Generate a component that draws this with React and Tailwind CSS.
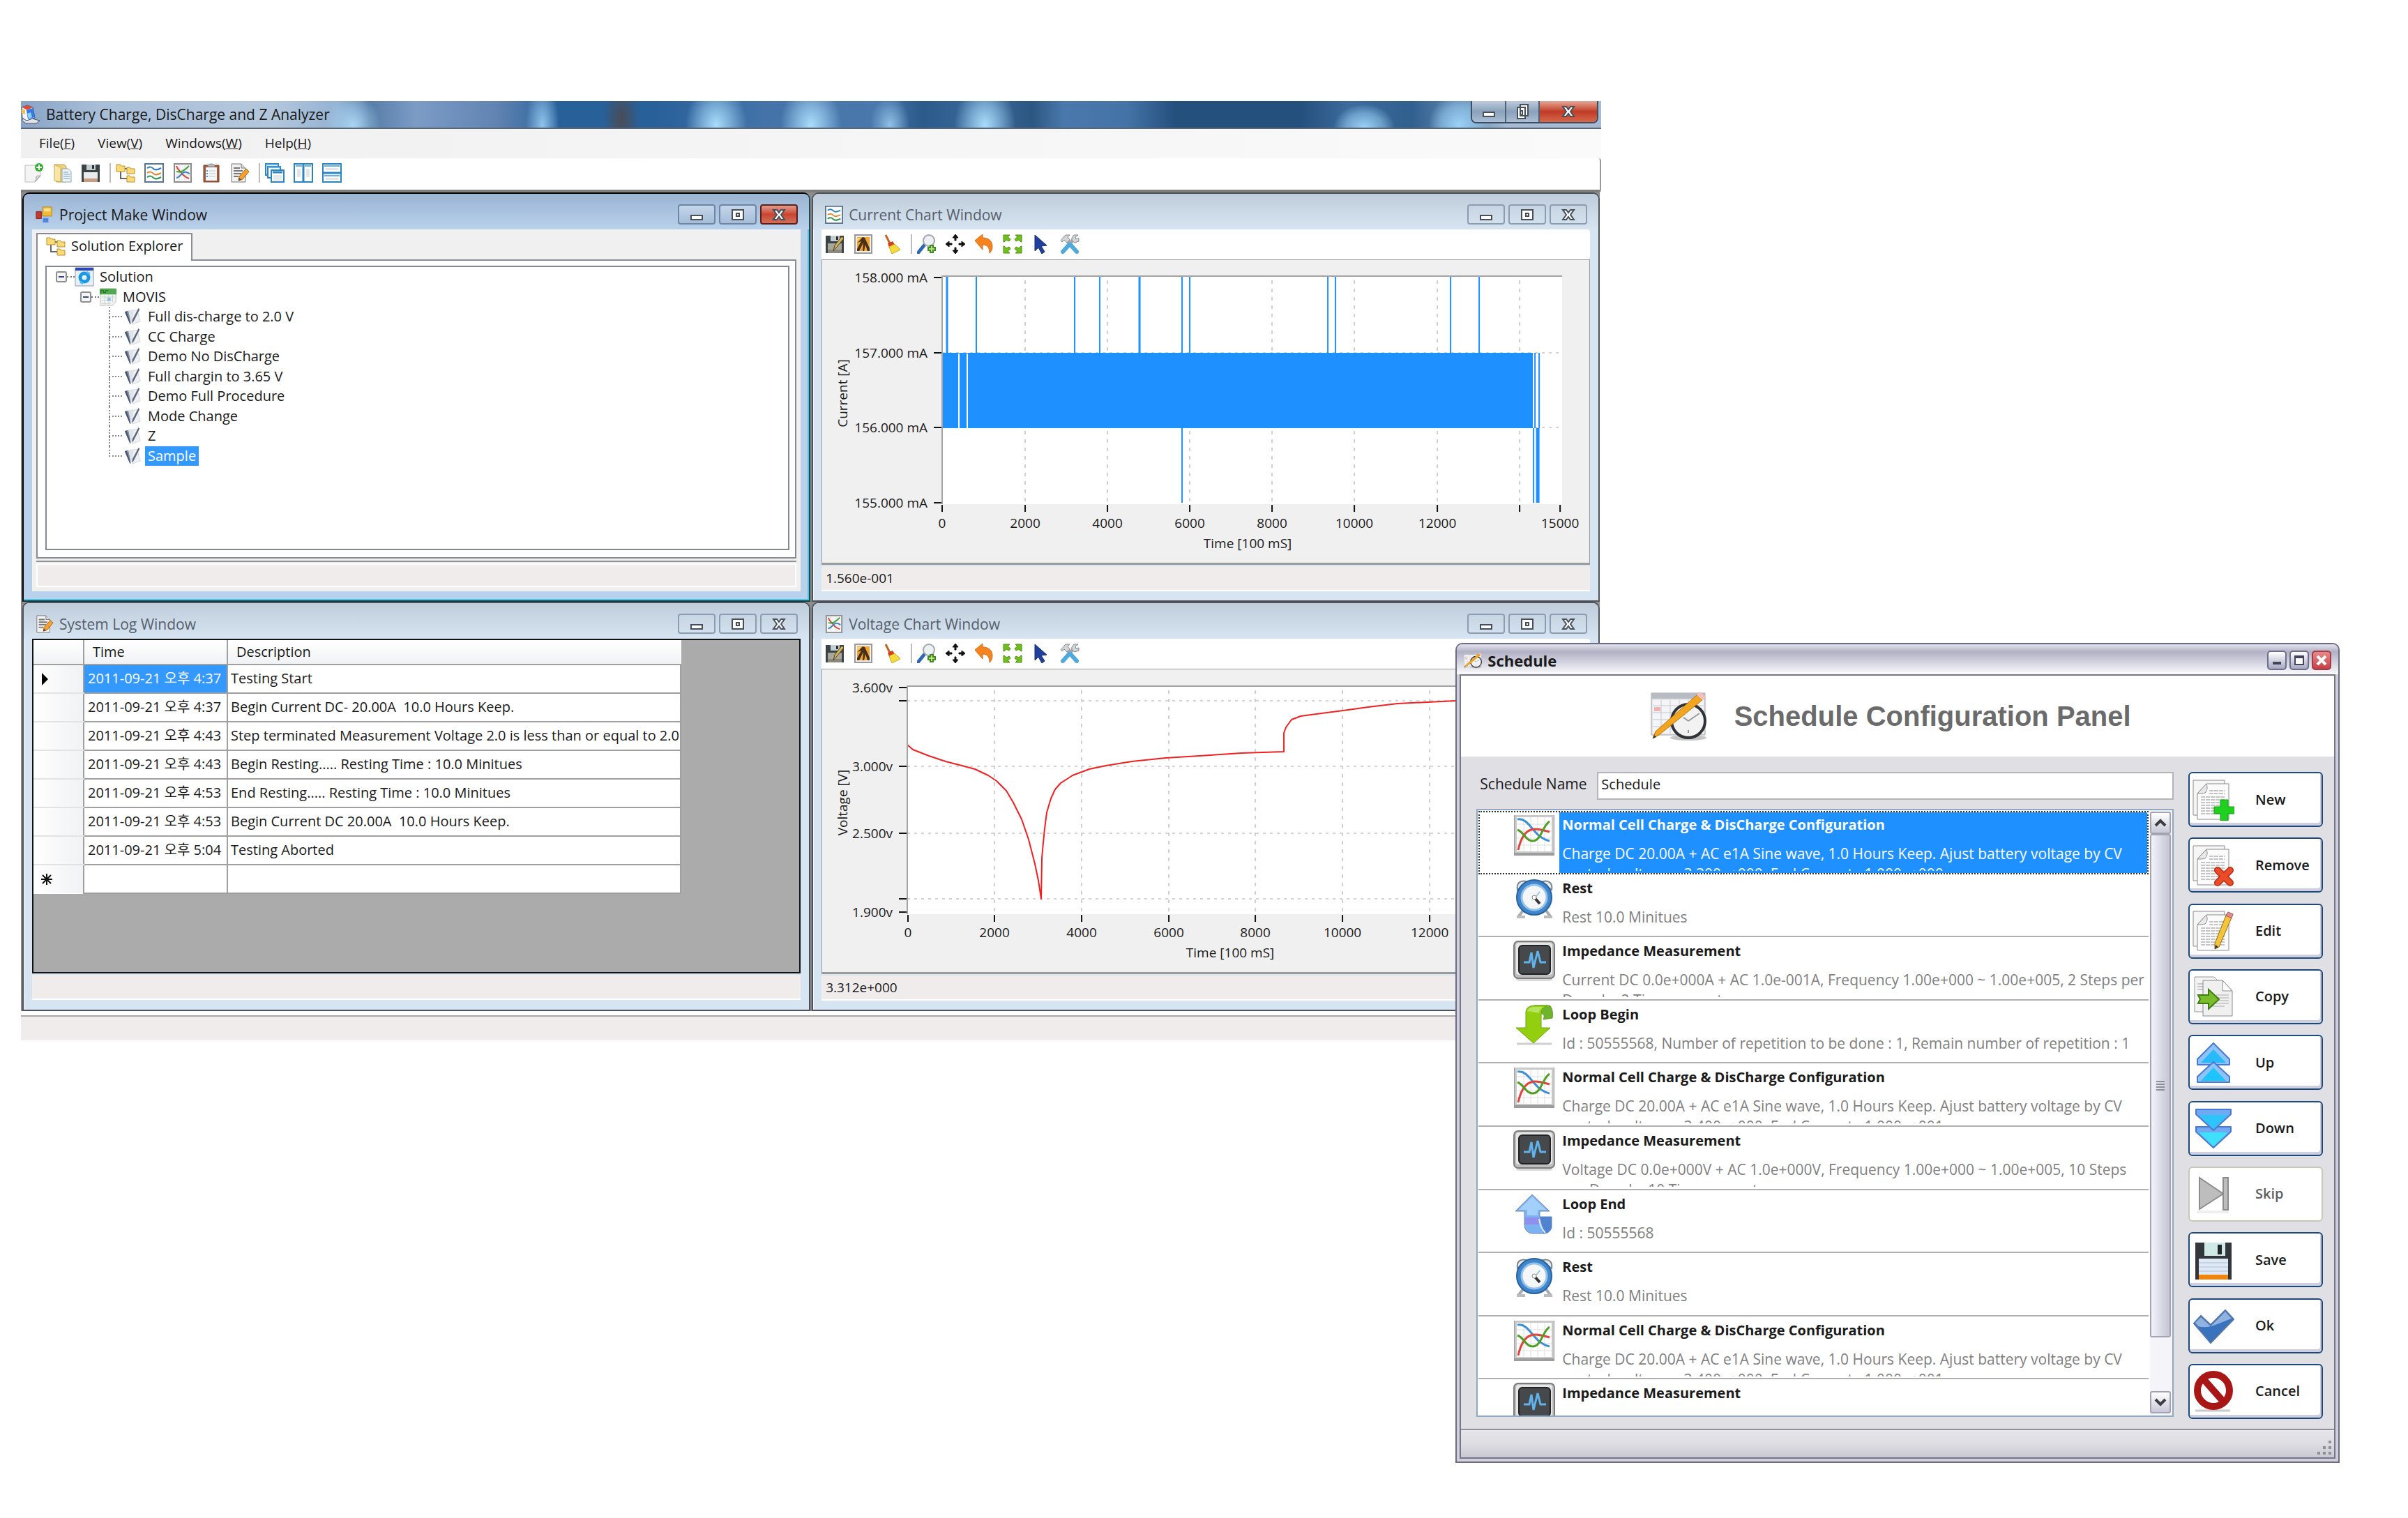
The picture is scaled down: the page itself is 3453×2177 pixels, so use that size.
const logRows = [
  { time: "2011-09-21 오후 4:37", text: "Testing Start", selected: true },
  { time: "2011-09-21 오후 4:37", text: "Begin Current DC- 20.00A  10.0 Hours Keep." },
  { time: "2011-09-21 오후 4:43", text: "Step terminated Measurement Voltage 2.0 is less than or equal to 2.0" },
  { time: "2011-09-21 오후 4:43", text: "Begin Resting..... Resting Time : 10.0 Minitues" },
  { time: "2011-09-21 오후 4:53", text: "End Resting..... Resting Time : 10.0 Minitues" },
  { time: "2011-09-21 오후 4:53", text: "Begin Current DC 20.00A  10.0 Hours Keep." },
  { time: "2011-09-21 오후 5:04", text: "Testing Aborted" },
]

const treeItems = [
  "Full dis-charge to 2.0 V",
  "CC Charge",
  "Demo No DisCharge",
  "Full chargin to 3.65 V",
  "Demo Full Procedure",
  "Mode Change",
  "Z",
  "Sample",
]

const steps = [
  { icon: CurvesIcon, title: "Normal Cell Charge & DisCharge Configuration", lines: ["Charge DC 20.00A + AC e1A Sine wave, 1.0 Hours Keep. Ajust battery voltage by CV", "control, voltage = 3.300e+000, End Current : 1.000e+000"], selected: true },
  { icon: AlarmIcon, title: "Rest", lines: ["Rest 10.0 Minitues"] },
  { icon: PulseIcon, title: "Impedance Measurement", lines: ["Current DC 0.0e+000A + AC 1.0e-001A, Frequency 1.00e+000 ~ 1.00e+005, 2 Steps per", "Decade, 2 Times repeat"] },
  { icon: LoopBeginIcon, title: "Loop Begin", lines: ["Id : 50555568, Number of repetition to be done : 1, Remain number of repetition : 1"] },
  { icon: CurvesIcon, title: "Normal Cell Charge & DisCharge Configuration", lines: ["Charge DC 20.00A + AC e1A Sine wave, 1.0 Hours Keep. Ajust battery voltage by CV", "control, voltage = 3.400e+000, End Current : 1.000e+001"] },
  { icon: PulseIcon, title: "Impedance Measurement", lines: ["Voltage DC 0.0e+000V + AC 1.0e+000V, Frequency 1.00e+000 ~ 1.00e+005, 10 Steps", "per Decade, 10 Times repeat"] },
  { icon: LoopEndIcon, title: "Loop End", lines: ["Id : 50555568"] },
  { icon: AlarmIcon, title: "Rest", lines: ["Rest 10.0 Minitues"] },
  { icon: CurvesIcon, title: "Normal Cell Charge & DisCharge Configuration", lines: ["Charge DC 20.00A + AC e1A Sine wave, 1.0 Hours Keep. Ajust battery voltage by CV", "control, voltage = 3.400e+000, End Current : 1.000e+001"] },
  { icon: PulseIcon, title: "Impedance Measurement", lines: [] },
]

const actions = [
  { label: "New", icon: NewDocIcon },
  { label: "Remove", icon: RemoveDocIcon },
  { label: "Edit", icon: EditDocIcon },
  { label: "Copy", icon: CopyDocIcon },
  { label: "Up", icon: UpIcon },
  { label: "Down", icon: DownIcon },
  { label: "Skip", icon: SkipIcon, disabled: true },
  { label: "Save", icon: DiskIcon },
  { label: "Ok", icon: OkIcon },
  { label: "Cancel", icon: CancelIcon },
]

/* ---------- small icons (28px grid) ---------- */

function Small({ children, className = "size-7" }) {
  return (
    <svg viewBox="0 0 28 28" className={"shrink-0 " + className} aria-hidden="true">
      {children}
    </svg>
  )
}

function AppIcon() {
  return (
    <Small>
      <path d="M1 22 8 18l19 5-5 4H7z" fill="#dfe3ea" stroke="#4b5160" />
      <path d="M1 4 9 1l8 3 3 15-12 4-6-4z" fill="#f2f5fa" stroke="#3b4a6b" />
      <path d="M2 4 9 1l8 3-8 4z" fill="#e34a35" />
      <path d="M8 8l9-3 3 13-10 3z" fill="#2f7bea" />
      <path d="M9 13l5-2 2 7-5 2z" fill="#8fd0fb" />
      <path d="M1 6l5 2v6l-5-2z" fill="#f4c24b" />
    </Small>
  )
}

function NewFileIcon() {
  return (
    <Small>
      <path d="M2 3h22v15l-8 9H2z" fill="#f4f4f4" stroke="#bdbdbd" />
      <path d="M24 18c-3 0-6 0-6 2s0 4-2 7z" fill="#dcdcdc" stroke="#9a9a9a" />
      <circle cx="22" cy="6" r="6" fill="#2fb02c" />
      <path d="M22 2v8M18 6h8" stroke="#fff" strokeWidth="2" />
    </Small>
  )
}

function OpenIcon() {
  return (
    <Small>
      <path d="M3 2h14l3 3v22H6z" fill="#efd27e" stroke="#c19e4b" />
      <path d="M3 2l9 4v21l-9-2z" fill="#f9e6a4" stroke="#c9a857" />
      <path d="M14 8h9l4 4v15H14z" fill="#eef5fa" stroke="#8fa5b5" />
      <path d="M16 13h7M16 16h9M16 19h9M16 22h9" stroke="#6f9db8" />
    </Small>
  )
}

function FloppyIcon({ pen }) {
  return (
    <Small>
      <path d="M1 2h26v25H1z" fill="#3b4347" />
      <path d="M8 2h13v8H8z" fill="#c3ced0" />
      <path d="M16 3h3v5h-3z" fill="#2a2f31" />
      <path d="M4 13h20v14H4z" fill={pen ? "#a9a69c" : "#e9ebec"} />
      <path d="M4 22h20v5H4z" fill={pen ? "#8b877b" : "#c59d83"} />
      {pen && <path d="M24 3 14 16l-2 8 5-6L27 6z" fill="#d1b45b" stroke="#51431c" />}
    </Small>
  )
}

function TreeIcon({ className }) {
  return (
    <Small className={className}>
      <path d="M7 11v11h11M13 8h6" fill="none" stroke="#666" strokeWidth="2" />
      <path d="M1 2h5l2 2h5v8H1z" fill="#fadb76" stroke="#bc8d2b" />
      <path d="M16 6h4l2 2h5v7H16z" fill="#fadb76" stroke="#bc8d2b" />
      <path d="M16 18h4l2 2h5v7H16z" fill="#fadb76" stroke="#bc8d2b" />
    </Small>
  )
}

function WavesIcon({ className }) {
  return (
    <Small className={className}>
      <path d="M1 1h26v26H1z" fill="#fff" stroke="#5a7493" strokeWidth="2" />
      <path d="M4 7c4-2 6-2 9 1s7 1 11-1" fill="none" stroke="#2f7fb9" strokeWidth="2" />
      <path d="M4 14c4-2 6-2 9 1s7 1 11-1" fill="none" stroke="#e08a34" strokeWidth="2" />
      <path d="M4 20c4-2 6-2 9 1s7 1 11-1" fill="none" stroke="#2f9550" strokeWidth="2" />
    </Small>
  )
}

function MiniChartIcon({ className }) {
  return (
    <Small className={className}>
      <path d="M2 1h24v26H2z" fill="#f7f7f7" stroke="#8d8d8d" strokeWidth="2" />
      <path d="M4 9h20M4 17h20M9 3v22M17 3v22" stroke="#ddd" />
      <path d="M5 4c2 6 6 8 8 11s5 5 10 7" fill="none" stroke="#d9443a" strokeWidth="2" />
      <path d="M5 12c8 2 11-2 18-8" fill="none" stroke="#3f9d3a" strokeWidth="2" />
      <path d="M5 21c6-1 7-7 11-8s5 1 8 2" fill="none" stroke="#357fc4" strokeWidth="2" />
    </Small>
  )
}

function ClipboardIcon() {
  return (
    <Small>
      <path d="M3 3h22v24H3z" fill="#a55a3c" stroke="#7f412a" />
      <path d="M6 6h16v19H6z" fill="#f4f7fa" />
      <path d="M9 5c0-3 2-4 5-4s5 1 5 4z" fill="#b9bec3" stroke="#8a8e92" />
      <path d="M11 11h9M11 15h9M11 19h9" stroke="#c0c6cc" />
      <path d="M7 11h2M7 15h2M7 19h2" stroke="#3aa0d8" strokeWidth="2" />
    </Small>
  )
}

function NoteIcon({ className }) {
  return (
    <Small className={className}>
      <path d="M2 1h14l6 6v20H2z" fill="#f2f2f2" stroke="#777" />
      <path d="M16 1v6h6" fill="#ddd" stroke="#777" />
      <path d="M5 7h9M5 11h13M5 15h11M5 19h7" stroke="#777" strokeWidth="2" />
      <path d="M23 8l4 4-9 11-6 2 1-6z" fill="#f6a12c" stroke="#a9611a" />
      <path d="M12 25l1-4 3 3z" fill="#444" />
    </Small>
  )
}

function CascadeIcon() {
  return (
    <Small>
      <g fill="#fff" stroke="#2a85c4" strokeWidth="2">
        <path d="M1 1h18v16H1z" />
        <path d="M4 5h18v16H4z" />
        <path d="M9 10h18v17H9z" />
      </g>
      <path d="M1 2h18M4 6h18" stroke="#5fb4ea" strokeWidth="2" />
      <path d="M11 13h14" stroke="#2a85c4" strokeWidth="3" />
      <path d="M12 17h12v8H12z" fill="#e5e9ee" />
    </Small>
  )
}

function SplitIcon({ rows }) {
  return (
    <Small>
      <path d="M1 1h26v26H1z" fill="#fff" stroke="#2a85c4" strokeWidth="2" />
      {rows ? (
        <path d="M1 14h26" stroke="#2a85c4" strokeWidth="3" />
      ) : (
        <path d="M14 1v26" stroke="#2a85c4" strokeWidth="3" />
      )}
      <path d={rows ? "M3 4h22M3 18h22" : "M3 4h9M16 4h9"} stroke="#5fb4ea" strokeWidth="2" />
      <path d={rows ? "M5 7h18v3H5zM5 21h18v3H5z" : "M5 8h5v12H5zM18 8h5v12h-5z"} fill="#e2e4ea" />
    </Small>
  )
}

function FormIcon() {
  return (
    <Small className="size-[26px]">
      <path d="M1 9h8v11H1z" fill="#c4382d" stroke="#8e211a" />
      <path d="M11 2h14v14H11z" fill="#f3b930" stroke="#b1831b" />
      <path d="M13 4h10v5H13z" fill="#fbe093" />
      <path d="M11 19h9v7h-9z" fill="#4d84d8" stroke="#8fb4ee" />
    </Small>
  )
}

function PictureIcon() {
  return (
    <Small>
      <path d="M2 1h24v26H2z" fill="#f2f0ee" stroke="#9a9a9a" strokeWidth="2" />
      <path d="M5 4h18v20H5z" fill="#f6a52a" />
      <path d="M5 5h6l-6 5z" fill="#fbd27a" />
      <path d="M6 12l7-8 3 1 7 15v4h-3l-3-9-2 9h-2l1-12-6 12H5v-3l6-11z" fill="#47301b" />
    </Small>
  )
}

function BroomIcon() {
  return (
    <Small>
      <path d="M5 1l6 12" stroke="#c0651e" strokeWidth="3" />
      <path d="M8 13l7-3 3 5-8 4z" fill="#d63c22" />
      <path d="M10 18l8-4 8 8-12 6z" fill="#f4dc3c" stroke="#c9a91a" />
    </Small>
  )
}

function ZoomIcon() {
  return (
    <Small>
      <path d="M2 26l8-10" stroke="#2f67b5" strokeWidth="5" strokeLinecap="round" />
      <circle cx="17" cy="9" r="8" fill="#eef1f4" stroke="#a2a6aa" strokeWidth="2" />
      <path d="M21 15v12M15 21h12" stroke="#3f8b22" strokeWidth="6" />
      <path d="M21 17v8M17 21h8" stroke="#b5e27d" strokeWidth="2" />
    </Small>
  )
}

function MoveIcon() {
  return (
    <Small>
      <path d="M14 0l4 5h-3v4h-2V5h-3zM14 28l4-5h-3v-4h-2v4h-3zM0 14l5-4v3h4v2H5v3zM28 14l-5-4v3h-4v2h4v3z" fill="#111" stroke="#111" />
    </Small>
  )
}

function UndoIcon() {
  return (
    <Small>
      <path d="M1 9 12 0v5c9 0 14 5 14 13 0 4-2 7-4 9 0-8-3-12-10-12v7z" fill="#f58420" stroke="#d9690f" />
    </Small>
  )
}

function ExpandIcon() {
  return (
    <Small>
      <g fill="#6fbf1d" stroke="#4b8f10">
        <path d="M1 1h9l-3 3 4 3-2 3-4-2-3 3H1zM27 1h-9l3 3-4 3 2 3 4-2 3 3h1zM1 27h9l-3-3 4-3-2-3-4 2-3-3H1zM27 27h-9l3-3-4-3 2-3 4 2 3-3h1z" />
      </g>
    </Small>
  )
}

function PointerIcon() {
  return (
    <Small>
      <path d="M5 1l17 15-8 1 5 8-4 3-5-9-5 5z" fill="#20409e" stroke="#12276c" />
    </Small>
  )
}

function ToolsIcon() {
  return (
    <Small>
      <path d="M13 14 22 5M15 14 6 5" stroke="#a3a7ab" strokeWidth="5" />
      <path d="M4 25 13 15M24 25 15 15" stroke="#4fa9dc" strokeWidth="6" strokeLinecap="round" />
      <path d="M1 9 8 1h6l-3 3 3 4-4 4-4-4-3 3zM26 1h-6l-3 4v4l4 3 6-2V6l-4 1-1-3z" fill="#d3d6d9" stroke="#83878b" />
    </Small>
  )
}

function SolutionIcon() {
  return (
    <Small>
      <path d="M1 1h26v26H1z" fill="#e9eff7" stroke="#8b99ad" />
      <path d="M1 1h26v4H1z" fill="#2b47b5" />
      <circle cx="14" cy="15" r="6" fill="none" stroke="#1698e6" strokeWidth="5" />
      <path d="M8 21l4 3M17 7l5 3" stroke="#56b9f2" strokeWidth="3" />
    </Small>
  )
}

function SheetIcon() {
  return (
    <Small className="size-[26px]">
      <path d="M2 1h24v20l-6 6H2z" fill="#f3f5f3" stroke="#b5bbb5" />
      <path d="M1 1h26v9H1z" fill="#52a851" />
      <path d="M3 8V4h4v3h3V4h4" stroke="#235f25" fill="none" />
      <path d="M4 14h20M4 19h18M4 24h14M9 11v15M15 11v15M21 11v11" stroke="#c6d0c8" />
      <path d="M13 15h5v5h-5z" fill="#8dbcf0" />
    </Small>
  )
}

function StepIcon() {
  return (
    <Small className="h-7 w-6">
      <path d="M8 4l14-1 5 19-13 5z" fill="#eef0f2" stroke="#cfd2d6" />
      <path d="M1 6l6-2 5 20-2 3z" fill="#8692a6" />
      <path d="M1 6l3-1 7 20-1 2z" fill="#46546e" />
      <path d="M8 4l8 1-3 18-2 4z" fill="#dfe3e8" />
      <path d="M24 0l2 2-10 20-3 3 1-6z" fill="#5b6880" />
    </Small>
  )
}

/* ---------- large icons (60px grid) ---------- */

function Large({ children, className = "size-[60px]" }) {
  return (
    <svg viewBox="0 0 60 60" className={"shrink-0 " + className} aria-hidden="true">
      {children}
    </svg>
  )
}

function CurvesIcon() {
  return (
    <Large>
      <path d="M1 1h58v58H1z" fill="#9c9c9c" />
      <path d="M2 1h56v54H2z" fill="#c9c9c9" />
      <path d="M5 4h50v49H5z" fill="#fff" />
      <path d="M5 14h50M5 24h50M5 34h50M5 44h50M15 4v49M25 4v49M35 4v49M45 4v49" stroke="#dedede" />
      <path d="M6 7c18-3 22 26 46 31" fill="none" stroke="#3c8fd6" strokeWidth="3" />
      <path d="M7 51c8-36 24-32 45-26" fill="none" stroke="#e0453c" strokeWidth="3" />
      <path d="M6 22c10 4 12 16 22 16 12 0 14-22 24-28" fill="none" stroke="#4f9e22" strokeWidth="3" />
    </Large>
  )
}

function AlarmIcon() {
  return (
    <Large>
      <path d="M14 47l-7 9M47 47l7 9" stroke="#a9adb1" strokeWidth="4" />
      <path d="M5 56h12M44 56h12" stroke="#bdbdbd" strokeWidth="4" />
      <path d="M6 17C4 6 12 2 22 6zM55 17C57 6 49 2 39 6z" fill="#e8ebee" stroke="#7d858d" strokeWidth="2" />
      <ellipse cx="30" cy="28" rx="25" ry="25" fill="#3f86cc" stroke="#27609e" strokeWidth="2" />
      <ellipse cx="30" cy="28" rx="18" ry="18" fill="#f4f6f8" stroke="#96c3ea" strokeWidth="3" />
      <path d="M31 29l7-9" stroke="#9cc6d8" strokeWidth="2" />
      <path d="M30 28l8 9" stroke="#333" strokeWidth="4" />
      <circle cx="30" cy="28" r="3" fill="#fff" stroke="#8b8b8b" />
    </Large>
  )
}

function PulseIcon() {
  return (
    <Large>
      <rect x="4" y="50" width="52" height="8" rx="4" fill="#d9d9d9" />
      <rect x="1" y="1" width="58" height="53" rx="6" fill="#bdbdbd" stroke="#7c7c7c" strokeWidth="2" />
      <rect x="4" y="3" width="52" height="46" rx="4" fill="#e6e6e6" />
      <rect x="8" y="7" width="45" height="41" rx="5" fill="#46494c" stroke="#222" strokeWidth="2" />
      <path d="M15 31h8l3-14 3 22 6-24 4 16h8" fill="none" stroke="#5fb3ea" strokeWidth="3" />
    </Large>
  )
}

function LoopBeginIcon() {
  return (
    <Large>
      <path d="M5 57h50" stroke="#cfcfcf" strokeWidth="3" />
      <path d="M30 2h22c4 3 5 10 4 18l-13 2c3-6 0-9-4-8z" fill="#6fb52b" stroke="#5c9a1e" />
      <path d="M18 34V12C18 5 24 2 31 2h18c-7 3-9 7-9 13v19h13L29 56 4 34z" fill="#93cf0e" stroke="#6da512" />
      <path d="M20 10c2-5 6-6 11-6h12c-4 2-6 6-6 9z" fill="#b5e45f" />
    </Large>
  )
}

function LoopEndIcon() {
  return (
    <Large>
      <path d="M16 44V25H3L27 1l25 24H38v8h17v14c0 5-5 10-11 10H28c-7 0-12-5-12-13z" fill="#7db2f2" stroke="#7587a8" />
      <path d="M38 33h17v14c0 5-5 10-11 10z" fill="#4f82cf" />
      <path d="M17 34h20v10H17z" fill="#8f8ff0" />
      <path d="M27 4 8 23h12v8h15v-8h12z" fill="#a3d0fb" />
      <path d="M37 36c1 9 4 15 9 20" stroke="#e2eefb" strokeWidth="2" fill="none" />
    </Large>
  )
}

function Pages() {
  return (
    <g>
      <path d="M1 2h45v50H1z" fill="#f6f6f6" stroke="#8b8b8b" />
      <path d="M20 7h32v51H7V21z" fill="#fbfbfb" stroke="#8b8b8b" />
      <path d="M20 7c2 6 1 10-2 13-3 1-7 1-11 1z" fill="#e8e8e8" stroke="#8b8b8b" />
      <path d="M24 17h22M24 21h22M12 26h34M12 30h34M12 34h34M12 38h34M12 42h34M12 46h34M12 50h34" stroke="#8f8f8f" strokeDasharray="6 1" />
    </g>
  )
}

function NewDocIcon() {
  return (
    <Large>
      <Pages />
      <path d="M40 30h11v10h9v10h-9v10H40V50H31V40h9z" fill="#1fd01f" stroke="#12a012" />
    </Large>
  )
}

function RemoveDocIcon() {
  return (
    <Large>
      <Pages />
      <path d="M36 37l18 18M54 37 36 55" stroke="#b52a12" strokeWidth="10" strokeLinecap="round" />
      <path d="M36 37l18 18M54 37 36 55" stroke="#ec4b28" strokeWidth="7" strokeLinecap="round" />
    </Large>
  )
}

function EditDocIcon() {
  return (
    <Large>
      <Pages />
      <path d="M48 8l8 3-18 42-6 3v-8z" fill="#f3c43c" stroke="#8f6b12" />
      <path d="M48 8l3-5 7 3-2 6z" fill="#e58a8a" stroke="#a85555" />
      <path d="M32 56l1-6 4 3z" fill="#333" />
    </Large>
  )
}

function CopyDocIcon() {
  return (
    <Large>
      <path d="M3 2h28l6 6v44H3z" fill="#f4f4f4" stroke="#999" />
      <path d="M7 12h22M7 16h22M7 20h22" stroke="#999" />
      <path d="M15 7h28l14 15v36H15z" fill="#f0f0f0" stroke="#888" />
      <path d="M43 7v15h14z" fill="#fff" stroke="#888" />
      <path d="M34 28h18M34 32h18M30 36h22M28 40h24M24 44h22" stroke="#aaa" />
      <path d="M8 28h15v-8l15 14-15 14v-8H8l3-6z" fill="#79bd2a" stroke="#3f7c12" strokeWidth="2" />
    </Large>
  )
}

function UpIcon() {
  return (
    <Large>
      <g stroke="#4b78d0" strokeWidth="2" strokeLinejoin="round">
        <path d="M30 2 53 25v8H7v-8z" fill="#8cc3fb" />
        <path d="M30 11 48 30H12z" fill="#27b9f8" stroke="none" />
        <path d="M30 29 53 50v8H7v-8z" fill="#8cc3fb" />
        <path d="M30 37 48 56H12z" fill="#1fc4fb" stroke="none" />
      </g>
    </Large>
  )
}

function DownIcon() {
  return (
    <Large>
      <g stroke="#4b78d0" strokeWidth="2" strokeLinejoin="round">
        <path d="M5 28h50v7L30 58 5 35z" fill="#6fa9f2" />
        <path d="M9 36h42L30 56z" fill="#3fe0fb" stroke="none" />
        <path d="M5 3h50v7L30 33 5 10z" fill="#6fa9f2" />
        <path d="M9 11h42L30 31z" fill="#2cc4fa" stroke="none" />
      </g>
    </Large>
  )
}

function SkipIcon() {
  return (
    <Large>
      <path d="M6 56h46" stroke="#eee" strokeWidth="4" />
      <path d="M10 7l34 23L10 52z" fill="#bdbdbd" stroke="#8c8c8c" strokeWidth="2" />
      <path d="M44 7h7v46h-7z" fill="#bdbdbd" stroke="#8c8c8c" strokeWidth="2" />
    </Large>
  )
}

function DiskIcon() {
  return (
    <Large>
      <path d="M4 5h52v53H4z" fill="#33373b" />
      <path d="M17 5h30v19H17z" fill="#cfeae6" />
      <path d="M36 8h6v14h-6z" fill="#23272a" />
      <path d="M9 28h42v24H9z" fill="#dfe9f5" />
      <path d="M9 34h42M9 40h42M9 46h42" stroke="#aebfd2" />
      <path d="M9 51h42v7H9z" fill="#f0850c" />
    </Large>
  )
}

function OkIcon() {
  return (
    <Large>
      <path d="M2 27l10-11 14 13L47 8l12 13-33 34z" fill="#3a73bd" stroke="#5476a8" strokeWidth="2" />
      <path d="M4 26l8-8 14 13L47 10l9 10C38 26 24 36 8 31z" fill="#b4cdef" opacity="0.7" />
    </Large>
  )
}

function CancelIcon() {
  return (
    <Large>
      <path d="M4 58h50" stroke="#c9c9c9" strokeWidth="3" />
      <circle cx="30" cy="29" r="23" fill="#fff" stroke="#a81616" strokeWidth="10" />
      <path d="M15 12l30 34" stroke="#a81616" strokeWidth="10" />
    </Large>
  )
}

function ScheduleIcon({ className }) {
  return (
    <svg viewBox="0 0 80 72" className={"shrink-0 " + className} aria-hidden="true">
      <path d="M1 3h77v60H1z" fill="#e4e4e9" stroke="#a3a3ad" />
      <path d="M1 3h77v8H1z" fill="#b9bbc4" />
      <path d="M3 13h73v48H3z" fill="#f5f5f8" />
      <path d="M3 21h73M3 31h73M3 41h73M3 51h73M15 13v48M28 13v48M41 13v48M54 13v48M67 13v48" stroke="#c5c6d0" />
      <path d="M5 23h9v6H5z" fill="#f3b1b1" />
      <ellipse cx="54" cy="67" rx="26" ry="4" fill="#c4c4c4" />
      <circle cx="54" cy="43" r="24" fill="#f2f2f2" stroke="#2f3236" strokeWidth="4" />
      <path d="M54 43l16-11M54 43l-7-5M54 60v-4" stroke="#9a9a9a" strokeWidth="2" />
      <path d="M66 6l8 7L12 63l-9 5 4-10z" fill="#f2a51e" stroke="#b9740f" />
      <path d="M66 6l4-5 9 7-5 5z" fill="#f3c2b9" />
      <path d="M3 68l2-5 3 3z" fill="#333" />
    </svg>
  )
}

/* ---------- window parts ---------- */

function Glyph({ kind }) {
  return (
    <svg viewBox="0 0 24 24" className="size-6" aria-hidden="true">
      <g fill="#fff" stroke="#474f5a" strokeWidth="2">
        {kind === "min" && <path d="M4 13h16v6H4z" />}
        {kind === "max" && <path d="M4 5h16v14H4zM10 10h4v4h-4z" />}
        {kind === "restore" && <path d="M9 2h11v16H9zM5 6h11v16H5zM9 11h3v6H9z" />}
        {kind === "close" && <path d="M4 5h5l3 4 3-4h5l-5 7 5 7h-5l-3-4-3 4H4l5-7z" />}
      </g>
    </svg>
  )
}

function ChildWindow({ icon, title, active, children }) {
  const frame = active
    ? "border-black border-r-[#1d4a55] border-b-[#0c3b42] bg-[#b9d1ea] shadow-[inset_-2px_-2px_0_#48c8e4]"
    : "border-[#4d5359] bg-[#d7e4f2] shadow-[inset_1px_1px_0_#f2f7fc]"
  const bar = active ? "bg-linear-to-b from-[#9ab4d3] to-[#b9d1ea]" : "bg-linear-to-b from-[#bfcddb] to-[#d7e4f2] text-[#56606b]"
  const btn = active
    ? "border-[#6d86a6] bg-linear-to-b from-[#c5d6ea] to-[#a5bdd9]"
    : "border-[#8c9db3]"
  const close = active ? "border-[#5d1f1c] bg-linear-to-b from-[#e09a8c] via-[#c9452f] to-[#d0705a]" : btn
  return (
    <section className={"flex min-w-0 flex-col rounded-t-[10px] border-2 px-3 pb-[13px] " + frame}>
      <header className={"-mx-3 flex h-[51px] shrink-0 items-center gap-2 rounded-t-lg pt-2 pr-4 pl-[17px] " + bar}>
        {icon}
        <h2 className="flex-1 text-[21px] leading-7 whitespace-nowrap">{title}</h2>
        <div className="flex gap-[5px]">
          <button aria-label="Minimize" className={"flex h-[29px] w-[54px] items-center justify-center rounded-[4px] border-2 " + btn}>
            <Glyph kind="min" />
          </button>
          <button aria-label="Maximize" className={"flex h-[29px] w-[54px] items-center justify-center rounded-[4px] border-2 " + btn}>
            <Glyph kind="max" />
          </button>
          <button aria-label="Close" className={"flex h-[29px] w-[54px] items-center justify-center rounded-[4px] border-2 " + close}>
            <Glyph kind="close" />
          </button>
        </div>
      </header>
      {children}
    </section>
  )
}

function Separator() {
  return <span className="-mr-[6px] h-7 w-[2px] bg-[#bdbdbd]" />
}

function ToolButton({ label, children }) {
  return (
    <button aria-label={label} className="size-7">
      {children}
    </button>
  )
}

function ChartToolbar() {
  return (
    <div className="flex h-[43px] shrink-0 items-center gap-[13px] rounded-r-sm bg-white pb-[2px] pl-[5px]">
      <ToolButton label="Save as"><FloppyIcon pen /></ToolButton>
      <ToolButton label="Save picture"><PictureIcon /></ToolButton>
      <ToolButton label="Clear"><BroomIcon /></ToolButton>
      <Separator />
      <ToolButton label="Zoom"><ZoomIcon /></ToolButton>
      <ToolButton label="Pan"><MoveIcon /></ToolButton>
      <ToolButton label="Undo"><UndoIcon /></ToolButton>
      <ToolButton label="Fit"><ExpandIcon /></ToolButton>
      <ToolButton label="Pointer"><PointerIcon /></ToolButton>
      <ToolButton label="Options"><ToolsIcon /></ToolButton>
    </div>
  )
}

function StatusLine({ children }) {
  return (
    <div className="mt-[2px] mb-[2px] h-[34px] shrink-0 bg-[#f0eceb] px-[6px] text-[19px] leading-[34px] shadow-[0_2px_0_#fff]">
      {children}
    </div>
  )
}

function Axes({ left, top, right, bottom, xTicks, yTicks, yTitle, xTitleAt, children }) {
  return (
    <svg viewBox="0 0 1100 434" className="block w-full text-[19px]" fill="#1a1a1a">
      <path d={`M${left} ${top}H${right}V${bottom}H${left}z`} fill="#fff" />
      {xTicks.map((t, i) => i > 0 && t.x < right - 5 && (
        <path key={t.x} d={`M${t.x} ${top + 6}V${bottom}`} stroke="#cfcfcf" strokeWidth="2" strokeDasharray="5 7" />
      ))}
      {yTicks.map(t => t.grid && (
        <path key={t.y} d={`M${left} ${t.y}H${right}`} stroke="#d3d3d3" strokeWidth="2" strokeDasharray="4 6" />
      ))}
      {children}
      <path d={`M${left} ${bottom}V${top}H${right}`} fill="none" stroke="#a3a3a3" strokeWidth="2" />
      {xTicks.map(t => (
        <g key={t.x}>
          <path d={`M${t.x} ${bottom + 1}v10`} stroke="#111" strokeWidth="2" />
          {t.label && <text x={t.x} y="384" textAnchor="middle">{t.label}</text>}
        </g>
      ))}
      {yTicks.map(t => (
        <g key={t.y}>
          <path d={`M${left - 12} ${t.y}h11`} stroke="#111" strokeWidth="2" />
          {t.label && <text x={left - 21} y={t.y + 7} textAnchor="end">{t.label}</text>}
        </g>
      ))}
      <text x={xTitleAt} y="413" textAnchor="middle">Time [100 mS]</text>
      <text transform="translate(36 191) rotate(-90)" textAnchor="middle">{yTitle}</text>
    </svg>
  )
}

function CurrentChart() {
  const up = [221, 362, 398, 516, 527, 725, 736, 901, 942]
  return (
    <Axes
      left={172}
      top={23}
      right={1061}
      bottom={350}
      xTitleAt={610}
      yTitle="Current  [A]"
      xTicks={[
        { x: 172, label: "0" }, { x: 291, label: "2000" }, { x: 409, label: "4000" },
        { x: 527, label: "6000" }, { x: 645, label: "8000" }, { x: 763, label: "10000" },
        { x: 882, label: "12000" }, { x: 1000 }, { x: 1058, label: "15000" },
      ]}
      yTicks={[
        { y: 25, label: "158.000 mA" }, { y: 133, label: "157.000 mA", grid: true },
        { y: 240, label: "156.000 mA", grid: true }, { y: 348, label: "155.000 mA" },
      ]}
    >
      <path d="M172 133H1019V241H172z" fill="#1e90ff" />
      <path d="M196 134V241M208 134V241" stroke="#fff" strokeWidth="2" />
      <path d={up.map(x => `M${x} 24V133`).join("")} stroke="#1e90ff" strokeWidth="2" />
      <path d="M179 24V133M455 24V133" stroke="#1e90ff" strokeWidth="3" />
      <path d="M516 241V348M1020 241V348M1022 133V241M1028 133V241" stroke="#1e90ff" strokeWidth="2" />
      <path d="M1026 241V348" stroke="#1e90ff" strokeWidth="5" />
    </Axes>
  )
}

function VoltageChart() {
  return (
    <Axes
      left={122}
      top={24}
      right={1061}
      bottom={351}
      xTitleAt={585}
      yTitle="Voltage [V]"
      xTicks={[
        { x: 123, label: "0" }, { x: 247, label: "2000" }, { x: 372, label: "4000" },
        { x: 497, label: "6000" }, { x: 621, label: "8000" }, { x: 746, label: "10000" },
        { x: 871, label: "12000" }, { x: 995 }, { x: 1058, label: "15000" },
      ]}
      yTicks={[
        { y: 26, label: "3.600v" }, { y: 45, grid: true }, { y: 139, label: "3.000v", grid: true },
        { y: 235, label: "2.500v", grid: true }, { y: 329, grid: true }, { y: 348, label: "1.900v" },
      ]}
    >
      <path
        d="M122 108 130 115 153 124 177 132 204 139 219 143 238 152 250 160 264 174 274 191 286 215 296 244 305 279 310 303 314 329 315 270 317 248 319 228 322 205 328 185 334 172 342 163 359 152 383 143 407 138 444 132 492 127 541 124 601 120 662 118 662 91 665 83 673 72 686 67 716 63 747 59 783 54 825 49 868 47 909 45 1000 44"
        fill="none"
        stroke="#f02020"
        strokeWidth="2"
        strokeLinejoin="round"
      />
    </Axes>
  )
}

function ChartWindow({ icon, title, status, children }) {
  return (
    <ChildWindow icon={icon} title={title}>
      <ChartToolbar />
      <div className="border border-b-[3px] border-[#9b9b9b] bg-[#f0f0f0]">{children}</div>
      <StatusLine>{status}</StatusLine>
    </ChildWindow>
  )
}

function Collapse() {
  return (
    <button aria-label="Collapse" className="flex size-4 items-center justify-center rounded-[3px] border-2 border-[#8f8f8f] bg-[#f4f4f4]">
      <span className="h-[2px] w-2 bg-[#33468f]" />
    </button>
  )
}

function ProjectWindow() {
  return (
    <ChildWindow active icon={<FormIcon />} title="Project Make Window">
      <div className="flex flex-1 flex-col bg-[#f0f0f0] px-[6px] pt-[5px] pb-[6px]">
        <div className="relative z-10 -mb-[2px] flex h-10 w-[224px] items-center gap-2 border-2 border-b-0 border-[#898c95] bg-white pb-1 pl-3">
          <TreeIcon />
          <button className="text-[20px] leading-7 whitespace-nowrap">Solution Explorer</button>
        </div>
        <div className="flex flex-1 border-2 border-[#898c95] bg-white pt-[7px] pr-2 pb-[9px] pl-[11px]">
          <div className="h-[408px] w-full border-2 border-[#828790]">
            <ul className="grid h-[285px] auto-rows-fr text-[20px]">
              <li className="flex items-center pl-[13px]">
                <Collapse />
                <span className="w-[11px] border-t-2 border-dotted border-[#777]" />
                <SolutionIcon />
                <span className="ml-1 px-1 leading-7">Solution</span>
              </li>
              <li className="flex items-center pl-12">
                <Collapse />
                <span className="w-[11px] border-t-2 border-dotted border-[#777]" />
                <SheetIcon />
                <span className="ml-1 px-1 leading-7">MOVIS</span>
              </li>
              {treeItems.map(item => (
                <li key={item} className="flex items-center pl-[89px]">
                  <span className="mr-[3px] flex w-[19px] flex-col self-stretch">
                    <span className="flex-1 border-b-2 border-l-2 border-dotted border-[#888]" />
                    <span className={item === "Sample" ? "flex-1" : "flex-1 border-l-2 border-dotted border-[#888]"} />
                  </span>
                  <StepIcon />
                  <span className={item === "Sample" ? "ml-[6px] bg-[#3399ff] px-1 leading-7 text-white" : "ml-[6px] px-1 leading-7"}>{item}</span>
                </li>
              ))}
            </ul>
          </div>
        </div>
        <div className="mt-[3px] border-t-2 border-[#8f9294]" />
        <div className="mt-[2px] h-[34px] border-2 border-white bg-[#f0eceb]" />
      </div>
    </ChildWindow>
  )
}

function LogWindow() {
  return (
    <ChildWindow icon={<NoteIcon className="size-[26px]" />} title="System Log Window">
      <div className="h-[480px] border-2 border-[#111] bg-[#ababab]">
        <table className="table-fixed border-collapse bg-white text-[20px]">
          <thead>
            <tr className="h-[35px] bg-linear-to-b from-white to-[#f1f2f4] text-left leading-[30px]">
              <th className="w-[72px] border-r-2 border-b-2 border-[#a0a0a0]" />
              <th className="w-[206px] border-r-2 border-b-2 border-[#a0a0a0] pl-3 font-normal">Time</th>
              <th className="w-[650px] border-b-2 border-[#a0a0a0] pl-3 font-normal">Description</th>
            </tr>
          </thead>
          <tbody className="leading-7">
            {logRows.map((row, i) => (
              <tr key={i} className="h-[41px]">
                <td className="border-r-2 border-b-2 border-b-[#e3e3e3] border-r-[#a0a0a0] bg-linear-to-r from-white to-[#f1f2f4] pl-3">
                  {row.selected && (
                    <svg viewBox="0 0 10 18" className="h-[18px] w-[10px]" aria-label="Current row">
                      <path d="M0 0 9 9 0 18z" />
                    </svg>
                  )}
                </td>
                <td className={row.selected ? "border-r-2 border-b-2 border-[#a0a0a0] bg-[#3399ff] pb-[2px] pl-[5px] whitespace-nowrap text-white" : "border-r-2 border-b-2 border-[#a0a0a0] pb-[2px] pl-[5px] whitespace-nowrap"}>{row.time}</td>
                <td className="border-r-2 border-b-2 border-[#a0a0a0] pb-[2px] pl-1 whitespace-pre">{row.text}</td>
              </tr>
            ))}
            <tr className="h-[41px]">
              <td className="border-r-2 border-[#a0a0a0] bg-linear-to-r from-white to-[#f1f2f4] pl-[10px]">
                <svg viewBox="0 0 18 18" className="size-[18px]" stroke="#111" strokeWidth="2" aria-label="New row">
                  <path d="M9 1v16M1 9h16M3 3l12 12M15 3 3 15" />
                </svg>
              </td>
              <td className="border-r-2 border-b-2 border-[#a0a0a0]" />
              <td className="border-r-2 border-b-2 border-[#a0a0a0]" />
            </tr>
          </tbody>
        </table>
      </div>
      <StatusLine />
    </ChildWindow>
  )
}

function MainWindow() {
  return (
    <main className="bg-white">
      <header className="flex h-10 items-center border-b-2 border-[#586675] bg-[radial-gradient(ellipse_40px_44px_at_21%_90%,#a9d4f2,transparent),radial-gradient(ellipse_24px_60px_at_33%_90%,#8fc4ec,transparent),radial-gradient(ellipse_26px_60px_at_38%_70%,#4a4c55,transparent),radial-gradient(ellipse_44px_60px_at_44%_90%,#a9dcfb,#a9dcfb88_50%,transparent),radial-gradient(ellipse_44px_60px_at_50%_90%,#a9dcfb,#a9dcfb88_50%,transparent),radial-gradient(ellipse_28px_44px_at_55%_90%,#8fc0e6,transparent),radial-gradient(ellipse_44px_60px_at_61%_90%,#a9dcfb,#a9dcfb88_50%,transparent),radial-gradient(ellipse_44px_34px_at_85%_100%,#9bd2f7,#9bd2f788_60%,transparent),radial-gradient(ellipse_44px_44px_at_91%_90%,#9bd2f7,#9bd2f788_60%,transparent),linear-gradient(90deg,#87a3c6,#a9bfd8_5%,#b3c7dc_16%,#93b2d2_20%,#557ca6_22%,#7c9cc6_25%,#6284b2_30%,#28609a_34%,#28609a_40%,#4373a8_47%,#4a78ad_54%,#2c5a8b_57%,#3a699b_61%,#2c5682_64%,#4a78ad_66%,#4473a7_70%,#24507e_73%,#24507e_81%,#3c6b9c_84%,#31608f_88%,#6d92b8_92%,#a4bbd3_94%)] pr-1">
        <AppIcon />
        <h1 className="ml-2 flex-1 text-[21px] leading-7 whitespace-nowrap">Battery Charge, DisCharge and Z Analyzer</h1>
        <div className="flex h-8 self-start overflow-hidden rounded-b-lg border-2 border-t-0 border-[#3f4f63]">
          <button aria-label="Minimize window" className="flex w-[49px] items-center justify-center border-r-2 border-[#4f6175] bg-linear-to-b from-[#bccbdc] via-[#8ba1ba] to-[#aabfd6]">
            <Glyph kind="min" />
          </button>
          <button aria-label="Restore window" className="flex w-12 items-center justify-center border-r-2 border-[#4f6175] bg-linear-to-b from-[#bccbdc] via-[#8ba1ba] to-[#aabfd6]">
            <Glyph kind="restore" />
          </button>
          <button aria-label="Close window" className="flex w-[82px] items-center justify-center bg-linear-to-b from-[#e3a595] via-[#c03a24] to-[#d5684c]">
            <Glyph kind="close" />
          </button>
        </div>
      </header>
      <nav className="flex h-[42px] items-center gap-[33px] bg-linear-to-r from-[#f0f0f0] to-[#fafafa] pb-[2px] pl-[26px] text-[19px] leading-7">
        <button>File(<u>F</u>)</button>
        <button>View(<u>V</u>)</button>
        <button>Windows(<u>W</u>)</button>
        <button>Help(<u>H</u>)</button>
      </nav>
      <div className="flex h-[49px] items-center gap-[13px] rounded-r border-r-2 border-b-4 border-r-[#999] border-b-[#7e7e7e] bg-white pb-[3px] pl-1">
        <ToolButton label="New"><NewFileIcon /></ToolButton>
        <ToolButton label="Open"><OpenIcon /></ToolButton>
        <ToolButton label="Save"><FloppyIcon /></ToolButton>
        <Separator />
        <ToolButton label="Project"><TreeIcon /></ToolButton>
        <ToolButton label="Current chart"><WavesIcon /></ToolButton>
        <ToolButton label="Voltage chart"><MiniChartIcon /></ToolButton>
        <ToolButton label="Report"><ClipboardIcon /></ToolButton>
        <ToolButton label="Log"><NoteIcon /></ToolButton>
        <Separator />
        <ToolButton label="Cascade"><CascadeIcon /></ToolButton>
        <ToolButton label="Tile vertically"><SplitIcon /></ToolButton>
        <ToolButton label="Tile horizontally"><SplitIcon rows /></ToolButton>
      </div>
      <div className="mr-[2px] grid grid-cols-2 gap-x-[2px] border-l-2 border-[#8a8a8a] bg-[#8d8d8d]">
        <ProjectWindow />
        <ChartWindow icon={<WavesIcon className="size-[26px]" />} title="Current Chart Window" status="1.560e-001">
          <CurrentChart />
        </ChartWindow>
        <LogWindow />
        <ChartWindow icon={<MiniChartIcon className="size-[26px]" />} title="Voltage Chart Window" status="3.312e+000">
          <VoltageChart />
        </ChartWindow>
      </div>
      <footer className="pt-[6px]">
        <div className="h-[36px] border-t-2 border-[#a9a9a9] bg-[#f0eceb]" />
      </footer>
    </main>
  )
}

function StepRow({ step }) {
  const Icon = step.icon
  return (
    <li
      aria-selected={!!step.selected}
      role="option"
      className={step.selected ? "flex overflow-hidden border-2 border-dotted border-[#333] bg-white" : "flex overflow-hidden border-b-2 border-[#b0b0b0] px-[2px] pt-[2px]"}
    >
      <div className="flex w-[114px] shrink-0 justify-end pt-[3px] pr-[6px]">
        <Icon />
      </div>
      <div className={step.selected ? "min-w-0 flex-1 bg-[#1e90ff] pt-1 pl-1 text-white" : "min-w-0 flex-1 pt-1 pl-1"}>
        <h3 className="text-[20px] leading-7 font-bold">{step.title}</h3>
        <p className={step.selected ? "mt-[13px] h-[39px] overflow-hidden text-[21px] leading-[29px] whitespace-nowrap" : "mt-[13px] h-[39px] overflow-hidden text-[21px] leading-[29px] whitespace-nowrap text-[#808080]"}>
          {step.lines.map(line => (
            <span key={line} className="block">{line}</span>
          ))}
        </p>
      </div>
    </li>
  )
}

function ScrollButton({ label, path }) {
  return (
    <button aria-label={label} className="flex h-8 shrink-0 items-center justify-center rounded-[3px] border-2 border-[#a3a3b2] bg-linear-to-b from-white to-[#c9c9d8]">
      <svg viewBox="0 0 18 12" className="h-3 w-[18px]" fill="none" stroke="#3d3d44" strokeWidth="4" aria-hidden="true">
        <path d={path} />
      </svg>
    </button>
  )
}

function ScheduleDialog() {
  return (
    <div role="dialog" aria-label="Schedule" className="absolute top-[922px] right-[98px] left-[60.45%] rounded-t-[10px] border-2 border-[#6c6c84] bg-[#cfcfdc] px-1 pb-1">
      <header className="-mx-1 flex h-[43px] items-center gap-1 rounded-t-lg bg-linear-to-b from-[#e4e4ee] via-[#b1b1c6] via-25% to-[#fbfbfd] pt-[3px] pr-[10px] pl-[10px]">
        <ScheduleIcon className="size-[26px]" />
        <h2 className="ml-1 flex-1 text-[22px] leading-7 font-bold">Schedule</h2>
        <button aria-label="Minimize dialog" className="flex size-7 items-center justify-center rounded-[5px] border-2 border-[#6d6d8c] bg-linear-to-b from-white to-[#a9a9c4]">
          <span className="mt-2 h-1 w-3 bg-[#44445c]" />
        </button>
        <button aria-label="Maximize dialog" className="flex size-7 items-center justify-center rounded-[5px] border-2 border-[#6d6d8c] bg-linear-to-b from-white to-[#a9a9c4]">
          <span className="h-[14px] w-[14px] border-2 border-t-4 border-[#44445c] bg-white" />
        </button>
        <button aria-label="Close dialog" className="flex size-7 items-center justify-center rounded-[5px] border-2 border-[#a33c44] bg-linear-to-b from-[#e8888a] to-[#c63f47]">
          <svg viewBox="0 0 16 16" className="size-4" stroke="#fff" strokeWidth="4" aria-hidden="true">
            <path d="M2 2l12 12M14 2 2 14" />
          </svg>
        </button>
      </header>
      <div className="border-2 border-[#75758e] bg-[#e0dfe3]">
        <div className="flex h-[116px] items-center justify-center gap-10 bg-white pr-5">
          <ScheduleIcon className="h-[72px] w-20" />
          <p className="font-['Liberation_Sans',Arial,sans-serif] text-[40px] leading-[48px] font-bold whitespace-nowrap text-[#6b6b6b]">Schedule Configuration Panel</p>
        </div>
        <div className="flex gap-[21px] pt-[22px] pr-4 pb-[14px] pl-[22px]">
          <div className="flex min-w-0 flex-1 flex-col">
            <div className="flex items-start">
              <label htmlFor="schedule-name" className="w-[173px] shrink-0 pl-[5px] text-[21px] leading-[34px] whitespace-nowrap">Schedule Name</label>
              <input id="schedule-name" defaultValue="Schedule" className="h-10 min-w-0 flex-1 border-2 border-[#b3b3bb] bg-white px-1 pb-[6px] text-[20px] leading-7" />
            </div>
            <div className="mt-[13px] flex h-[872px] border-2 border-[#8fa9c2] bg-white">
              <ul role="listbox" aria-label="Steps" className="mr-[2px] h-full min-w-0 flex-1 overflow-hidden pt-[1px] pl-[1px]">
                <div className="grid h-[906px] auto-rows-fr">
                  {steps.map((step, i) => (
                    <StepRow key={i} step={step} />
                  ))}
                </div>
              </ul>
              <div className="flex w-8 shrink-0 flex-col bg-[#f4f4f9] pt-[2px] pr-[2px] pb-[3px]">
                <ScrollButton label="Scroll up" path="M2 10l7-7 7 7" />
                <div className="flex h-[722px] flex-col items-center justify-center gap-[2px] rounded-[3px] border-2 border-[#a3a3b2] bg-linear-to-r from-[#f3f3f8] to-[#c5c5d6]">
                  <span className="h-[2px] w-3 bg-[#8d8d9c]" />
                  <span className="h-[2px] w-3 bg-[#8d8d9c]" />
                  <span className="h-[2px] w-3 bg-[#8d8d9c]" />
                  <span className="h-[2px] w-3 bg-[#8d8d9c]" />
                </div>
                <div className="flex-1" />
                <ScrollButton label="Scroll down" path="M2 2l7 7 7-7" />
              </div>
            </div>
          </div>
          <div className="flex h-[928px] w-[193px] shrink-0 flex-col justify-between">
            {actions.map(({ label, icon: Icon, disabled }) => (
              <button
                key={label}
                disabled={disabled}
                className="flex h-[79px] items-center gap-[30px] rounded-[6px] border-2 border-[#1d4a7a] bg-white pl-1 text-[20px] font-semibold shadow-[inset_-2px_-4px_0_#cfcfe2] disabled:border-[#c9c7ba] disabled:text-[#5f5f5f] disabled:shadow-none"
              >
                <Icon />
                {label}
              </button>
            ))}
          </div>
        </div>
        <footer className="flex h-[41px] items-end justify-end border-t-2 border-[#8f8f99] bg-linear-to-b from-[#e6e6ea] via-[#dddde2] to-[#c9c9d0] p-1">
          <svg viewBox="0 0 20 20" className="size-5" fill="#8f8f98" aria-hidden="true">
            <path d="M16 0h4v4h-4zM8 8h4v4H8zM16 8h4v4h-4zM0 16h4v4H0zM8 16h4v4H8zM16 16h4v4h-4z" />
          </svg>
        </footer>
      </div>
    </div>
  )
}

export default function App() {
  return (
    <div className="relative min-h-screen bg-white pt-[145px] pr-[33.5%] pb-[687px] pl-[30px] font-['Open_Sans','Noto_Sans_CJK_KR',sans-serif] text-[#1a1a1a]">
      <MainWindow />
      <ScheduleDialog />
    </div>
  )
}
